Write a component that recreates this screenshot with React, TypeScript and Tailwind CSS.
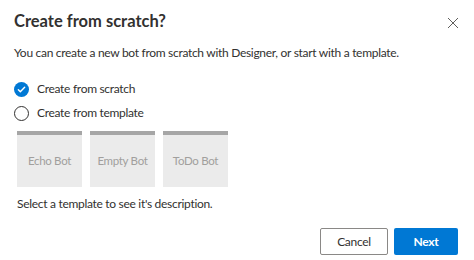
import { useState } from "react";

const templates = ["Echo Bot", "Empty Bot", "ToDo Bot"];

const App = () => {
  const [mode, setMode] = useState<"scratch" | "template">("scratch");

  const radio = (checked: boolean) =>
    checked ? (
      <span className="w-[15px] h-[15px] rounded-full bg-[#0078d4] flex items-center justify-center">
        <svg viewBox="0 0 10 10" className="w-[9px] h-[9px]" fill="none" stroke="white" strokeWidth={1.6} strokeLinecap="round" strokeLinejoin="round">
          <path d="M1.5 5.2l2.2 2.2 4.8-4.8" />
        </svg>
      </span>
    ) : (
      <span className="w-[15px] h-[15px] rounded-full border border-[#323130]" />
    );

  return (
    <div className="w-[474px] h-[260px] bg-white text-[#323130] font-['Segoe_UI','Lato',sans-serif] tracking-[-0.3px] flex flex-col px-[14px]">
      <div className="flex items-start justify-between pt-[9px]">
        <h1 className="text-[16.5px] leading-[24px] font-bold tracking-normal">
          Create from scratch?
        </h1>
        <button className="mt-[8px] mr-[1px] w-[12px] h-[12px] text-[#605e5c]">
          <svg viewBox="0 0 12 12" className="w-[12px] h-[12px]" fill="none" stroke="currentColor" strokeWidth={1}>
            <path d="M1 1l10 10M11 1L1 11" />
          </svg>
        </button>
      </div>

      <p className="mt-[11px] text-[12px] leading-[18px]">
        You can create a new bot from scratch with Designer, or start with a template.
      </p>

      <div className="mt-[18px] flex flex-col gap-[6px]">
        <label className="flex items-center gap-[8px] h-[18px] cursor-pointer" onClick={() => setMode("scratch")}>
          {radio(mode === "scratch")}
          <span className="text-[12px]">Create from scratch</span>
        </label>
        <label className="flex items-center gap-[8px] h-[18px] cursor-pointer" onClick={() => setMode("template")}>
          {radio(mode === "template")}
          <span className="text-[12px]">Create from template</span>
        </label>
      </div>

      <div className="mt-[9px] ml-[3px] flex gap-[8px]">
        {templates.map((t) => (
          <div key={t} className="w-[65px] h-[56px] bg-[#ebebeb] border-t-[4px] border-[#a6a6a6] flex items-center justify-center">
            <span className="text-[11.5px] text-[#a19f9d]">{t}</span>
          </div>
        ))}
      </div>

      <p className="mt-[8px] ml-[3px] text-[12px] leading-[18px]">
        Select a template to see it's description.
      </p>

      <div className="mt-[15px] flex justify-end gap-[6px] pr-[2px]">
        <button className="w-[68px] h-[27px] border border-[#8a8886] rounded-[2px] text-[12px] bg-white">
          Cancel
        </button>
        <button className="w-[64px] h-[27px] rounded-[2px] bg-[#0078d4] text-white text-[12px] font-bold">
          Next
        </button>
      </div>
    </div>
  );
};

export default App;
